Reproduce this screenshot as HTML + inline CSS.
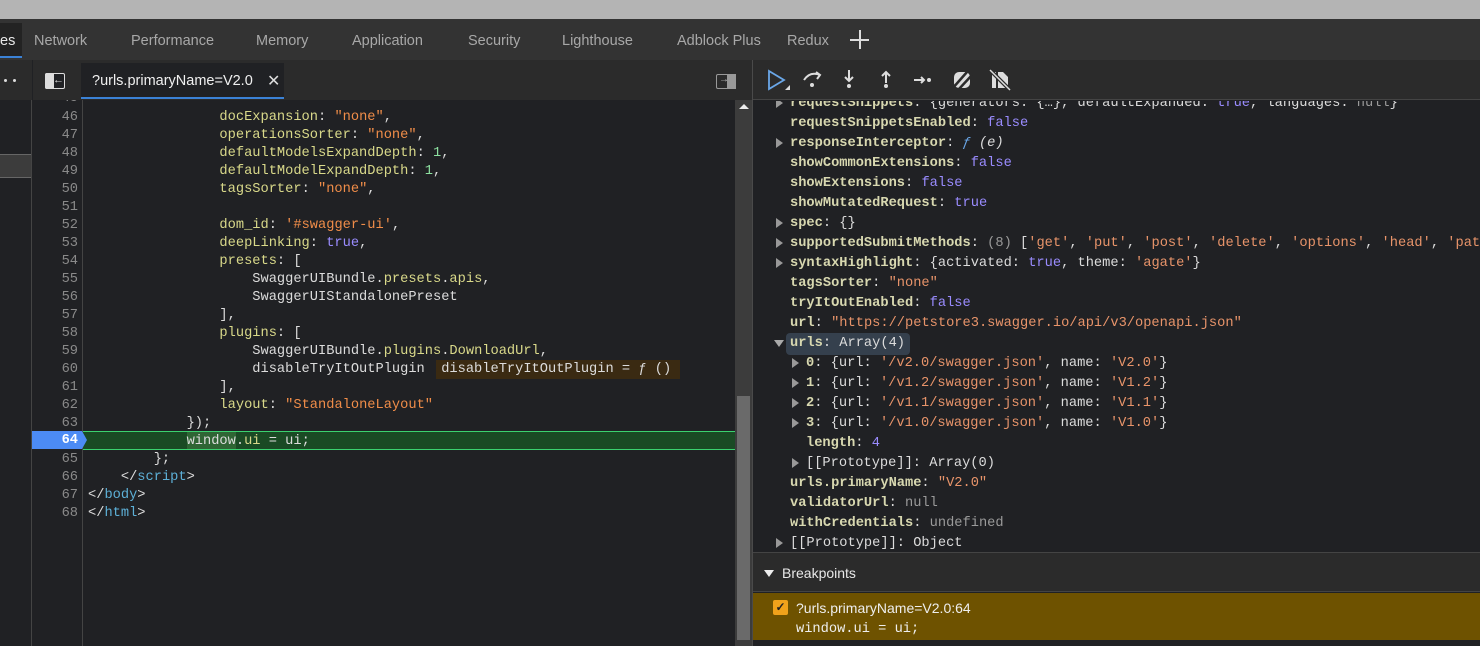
<!DOCTYPE html><html><head><style>
*{margin:0;padding:0;box-sizing:border-box}
body{width:1480px;height:646px;overflow:hidden;background:#202124;position:relative;font-family:"Liberation Sans",sans-serif}
.a{position:absolute}
.tab{position:absolute;top:33px;font-size:14.5px;color:#a8a8a8}
.ln{position:absolute;left:32px;width:46px;text-align:right;color:#8a8a8a;font-family:"Liberation Mono",monospace;font-size:13.7px}
.cl{position:absolute;left:88px;font-family:"Liberation Mono",monospace;font-size:13.7px;white-space:pre;color:#dcdcdc}
.p{color:#d9d98a}.s{color:#f08d49}.n{color:#8de0a0}.t{color:#5db0d7}
.r{position:absolute;font-family:"Liberation Mono",monospace;font-size:13.7px;white-space:pre;color:#dcdcdc}
.k{color:#d8d8b0;font-weight:bold}.b{color:#9a8cff}.rs{color:#e8946a}.g{color:#9a9a9a}
.tri{position:absolute;width:0;height:0;border-left:7px solid #999;border-top:5px solid transparent;border-bottom:5px solid transparent}
.trd{position:absolute;width:0;height:0;border-top:7px solid #aaa;border-left:5px solid transparent;border-right:5px solid transparent}
</style></head><body>
<div class="ln" style="top:90px;line-height:18px">45</div>
<div class="a" style="left:0;top:0;width:1480px;height:19px;background:#b4b4b4"></div>
<div class="a" style="left:0;top:19px;width:1480px;height:41px;background:#333333"></div>
<div class="a" style="left:0;top:23px;width:22px;height:35px;background:#232323;border-bottom:2px solid #3b82d6"></div>
<div class="tab" style="left:0;color:#e8e8e8">es</div>
<div class="tab" style="left:34px">Network</div>
<div class="tab" style="left:131px">Performance</div>
<div class="tab" style="left:256px">Memory</div>
<div class="tab" style="left:352px">Application</div>
<div class="tab" style="left:468px">Security</div>
<div class="tab" style="left:562px">Lighthouse</div>
<div class="tab" style="left:677px">Adblock Plus</div>
<div class="tab" style="left:787px">Redux</div>
<div class="a" style="left:850px;top:39px;width:19px;height:1.5px;background:#ddd"></div>
<div class="a" style="left:859px;top:30px;width:1.5px;height:19px;background:#ddd"></div>
<div class="a" style="left:0;top:60px;width:32px;height:586px;background:#202124;border-right:1px solid #444"></div>
<div class="a" style="left:0;top:60px;width:32px;height:40px;background:#2b2b2b"></div>
<div class="a" style="left:4px;top:79px;width:3px;height:3px;background:#ddd;border-radius:2px"></div>
<div class="a" style="left:13px;top:79px;width:3px;height:3px;background:#ddd;border-radius:2px"></div>
<div class="a" style="left:0;top:154px;width:31px;height:24px;background:#3c3c3c;border-top:1px solid #666;border-bottom:1px solid #666"></div>
<div class="a" style="left:33px;top:60px;width:720px;height:40px;background:#2b2b2b"></div>
<div class="a" style="left:45px;top:73px;width:20px;height:16px;border:1.5px solid #ddd;border-radius:2px;background:#202124"></div>
<div class="a" style="left:45px;top:73px;width:9px;height:16px;background:#ddd;border-radius:2px 0 0 2px"></div>
<div class="a" style="left:53px;top:74px;font-size:11px;color:#ddd">&#8592;</div>
<div class="a" style="left:81px;top:63px;width:203px;height:36px;background:#202124;border-bottom:2px solid #3b82d6"></div>
<div class="a" style="left:92px;top:73px;font-size:14.5px;color:#f0f0f0">?urls.primaryName=V2.0</div>
<div class="a" style="left:267px;top:71px;font-size:16px;color:#ddd">✕</div>
<div class="a" style="left:716px;top:74px;width:20px;height:15px;border:1.5px solid #999;border-radius:2px"></div>
<div class="a" style="left:727px;top:74px;width:9px;height:15px;background:#999"></div>
<div class="a" style="left:719px;top:74px;font-size:10px;color:#bbb">&#8594;</div>
<div class="a" style="left:82px;top:100px;width:1px;height:546px;background:#444"></div>
<div id="g"></div>
<div class="a" style="left:83px;top:431px;width:652px;height:19px;background:#1a4a24;border-top:1px solid #3bd16f;border-bottom:1px solid #3bd16f"></div>
<div class="a" style="left:187px;top:432px;width:49px;height:17px;background:#2f6534"></div>
<div class="a" style="left:32px;top:431px;width:50px;height:18px;background:#4c8bf5"></div>
<div class="a" style="left:82px;top:431px;width:0;height:0;border-left:5px solid #4c8bf5;border-top:9px solid transparent;border-bottom:9px solid transparent"></div>
<div class="ln" style="top:432px;line-height:18px;color:#fff;font-weight:bold">64</div>
<div class="a" style="left:436px;top:360px;width:244px;height:19px;background:#3a2a12"></div>
<div id="c"></div>
<div class="a" style="left:735px;top:100px;width:17px;height:546px;background:#3c3c3c"></div>
<div class="a" style="left:739px;top:104px;width:0;height:0;border-bottom:5px solid #eee;border-left:5px solid transparent;border-right:5px solid transparent"></div>
<div class="a" style="left:737px;top:396px;width:13px;height:244px;background:#6a6a6a"></div>
<div class="a" style="left:752px;top:60px;width:1px;height:586px;background:#4a4a4a"></div>
<div class="a" style="left:753px;top:60px;width:727px;height:40px;background:#2b2b2b;border-bottom:1px solid #444"></div>
<svg class="a" style="left:760px;top:64px" width="280" height="34" viewBox="0 0 280 34" fill="none" stroke="#ddd" stroke-width="2">
<path d="M9 7 L24 16 L9 25 Z" stroke="#6aa7e8" stroke-width="1.8"/>
<path d="M25 26 L30 26 L30 21 Z" fill="#ddd" stroke="none"/>
<path d="M44 16 Q50 7 60 11 M56 8 L60 11 L57 15"/><circle cx="52" cy="21" r="2" fill="#ddd" stroke="none"/>
<path d="M89 6 V17 M85 13 L89 17 L93 13"/><circle cx="89" cy="22" r="2" fill="#ddd" stroke="none"/>
<path d="M126 8 V19 M122 12 L126 8 L130 12"/><circle cx="126" cy="22" r="2" fill="#ddd" stroke="none"/>
<path d="M154 16 H164 M161 13 L164 16 L161 19"/><circle cx="169" cy="16" r="2" fill="#ddd" stroke="none"/>
<rect x="194" y="8" width="16" height="16" rx="5" fill="#ddd" stroke="none"/><path d="M192 25 L207 8 M199 25 L212 11" stroke="#2b2b2b" stroke-width="2.5"/>
<path d="M232 8 H243 L248 13 V24 H232 Z" fill="#ddd" stroke="none"/><path d="M237 8 V24" stroke="#2b2b2b" stroke-width="2"/><path d="M230 6 L250 26" stroke="#2b2b2b" stroke-width="4"/><path d="M230 6 L250 26" stroke="#ddd" stroke-width="1.5"/>
</svg>
<div id="r"></div>
<div class="a" style="left:753px;top:552px;width:727px;height:40px;background:#2b2b2b;border-top:1px solid #444;border-bottom:1px solid #444"></div>
<div class="trd" style="left:764px;top:570px;border-top-color:#eee"></div>
<div class="a" style="left:782px;top:565px;font-size:14px;color:#e8e8e8">Breakpoints</div>
<div class="a" style="left:753px;top:593px;width:727px;height:47px;background:#6e5200"></div>
<div class="a" style="left:773px;top:600px;width:15px;height:15px;background:#f0a21b;border-radius:2px;color:#222;font-size:12px;line-height:15px;text-align:center;font-weight:bold">✓</div>
<div class="a" style="left:796px;top:600px;font-size:14px;color:#eee">?urls.primaryName=V2.0:64</div>
<div class="r" style="left:796px;top:622px;color:#eee">window.ui = ui;</div>
<script>
var L=[[46,'                <span class=p>docExpansion</span>: <span class=s>"none"</span>,'],
[47,'                <span class=p>operationsSorter</span>: <span class=s>"none"</span>,'],
[48,'                <span class=p>defaultModelsExpandDepth</span>: <span class=n>1</span>,'],
[49,'                <span class=p>defaultModelExpandDepth</span>: <span class=n>1</span>,'],
[50,'                <span class=p>tagsSorter</span>: <span class=s>"none"</span>,'],
[51,''],
[52,'                <span class=p>dom_id</span>: <span class=s>\'#swagger-ui\'</span>,'],
[53,'                <span class=p>deepLinking</span>: <span class=b>true</span>,'],
[54,'                <span class=p>presets</span>: ['],
[55,'                    SwaggerUIBundle.<span class=p>presets</span>.<span class=p>apis</span>,'],
[56,'                    SwaggerUIStandalonePreset'],
[57,'                ],'],
[58,'                <span class=p>plugins</span>: ['],
[59,'                    SwaggerUIBundle.<span class=p>plugins</span>.<span class=p>DownloadUrl</span>,'],
[60,'                    disableTryItOutPlugin  disableTryItOutPlugin = ƒ ()'],
[61,'                ],'],
[62,'                <span class=p>layout</span>: <span class=s>"StandaloneLayout"</span>'],
[63,'            });'],
[64,'            window.<span class=p>ui</span> = ui;'],
[65,'        };'],
[66,'    &lt;/<span class=t>script</span>&gt;'],
[67,'&lt;/<span class=t>body</span>&gt;'],
[68,'&lt;/<span class=t>html</span>&gt;']];
var h='',g='';
L.forEach(function(l){var y=109+(l[0]-46)*18;
if(l[0]!=64)g+='<div class="ln" style="top:'+y+'px;line-height:18px">'+l[0]+'</div>';
h+='<div class="cl" style="top:'+y+'px;line-height:18px">'+l[1]+'</div>';});
document.getElementById('g').outerHTML=g;document.getElementById('c').outerHTML=h;
var R=[[1,790,'<span class=k>requestSnippets</span>: {generators: {…}, defaultExpanded: <span class=b>true</span>, languages: <span class=g>null</span>}'],
[0,790,'<span class=k>requestSnippetsEnabled</span>: <span class=b>false</span>'],
[1,790,'<span class=k>responseInterceptor</span>: <i style="color:#6aa7e8">ƒ</i> <i>(e)</i>'],
[0,790,'<span class=k>showCommonExtensions</span>: <span class=b>false</span>'],
[0,790,'<span class=k>showExtensions</span>: <span class=b>false</span>'],
[0,790,'<span class=k>showMutatedRequest</span>: <span class=b>true</span>'],
[1,790,'<span class=k>spec</span>: {}'],
[1,790,'<span class=k>supportedSubmitMethods</span>: <span class=g>(8)</span> [<span class=rs>\'get\'</span>, <span class=rs>\'put\'</span>, <span class=rs>\'post\'</span>, <span class=rs>\'delete\'</span>, <span class=rs>\'options\'</span>, <span class=rs>\'head\'</span>, <span class=rs>\'patch\'</span>'],
[1,790,'<span class=k>syntaxHighlight</span>: {activated: <span class=b>true</span>, theme: <span class=rs>\'agate\'</span>}'],
[0,790,'<span class=k>tagsSorter</span>: <span class=rs>"none"</span>'],
[0,790,'<span class=k>tryItOutEnabled</span>: <span class=b>false</span>'],
[0,790,'<span class=k>url</span>: <span class=rs>"https://petstore3.swagger.io/api/v3/openapi.json"</span>'],
[2,790,'<span class=k>urls</span>: Array(4)'],
[1,806,'<span class=k>0</span>: {url: <span class=rs>\'/v2.0/swagger.json\'</span>, name: <span class=rs>\'V2.0\'</span>}'],
[1,806,'<span class=k>1</span>: {url: <span class=rs>\'/v1.2/swagger.json\'</span>, name: <span class=rs>\'V1.2\'</span>}'],
[1,806,'<span class=k>2</span>: {url: <span class=rs>\'/v1.1/swagger.json\'</span>, name: <span class=rs>\'V1.1\'</span>}'],
[1,806,'<span class=k>3</span>: {url: <span class=rs>\'/v1.0/swagger.json\'</span>, name: <span class=rs>\'V1.0\'</span>}'],
[0,806,'<span class=k>length</span>: <span class=b>4</span>'],
[1,806,'[[Prototype]]: Array(0)'],
[0,790,'<span class=k>urls.primaryName</span>: <span class=rs>"V2.0"</span>'],
[0,790,'<span class=k>validatorUrl</span>: <span class=g>null</span>'],
[0,790,'<span class=k>withCredentials</span>: <span class=g>undefined</span>'],
[1,790,'[[Prototype]]: Object']];
var r='<div class="a" style="left:753px;top:101px;width:727px;height:451px;overflow:hidden">';
R.forEach(function(l,i){var y=i*20-7;
if(l[0]==2)r+='<div class="a" style="left:'+(l[1]-753-4)+'px;top:'+(y-1)+'px;width:124px;height:22px;background:#35404d;border-radius:4px"></div><div class="trd" style="left:'+(l[1]-753-16)+'px;top:'+(y+6)+'px"></div>';
if(l[0]==1)r+='<div class="tri" style="left:'+(l[1]-753-14)+'px;top:'+(y+4)+'px"></div>';
r+='<div class="r" style="left:'+(l[1]-753)+'px;top:'+y+'px;line-height:20px">'+l[2]+'</div>';});
r+='</div>';document.getElementById('r').outerHTML=r;
</script>
</body></html>
